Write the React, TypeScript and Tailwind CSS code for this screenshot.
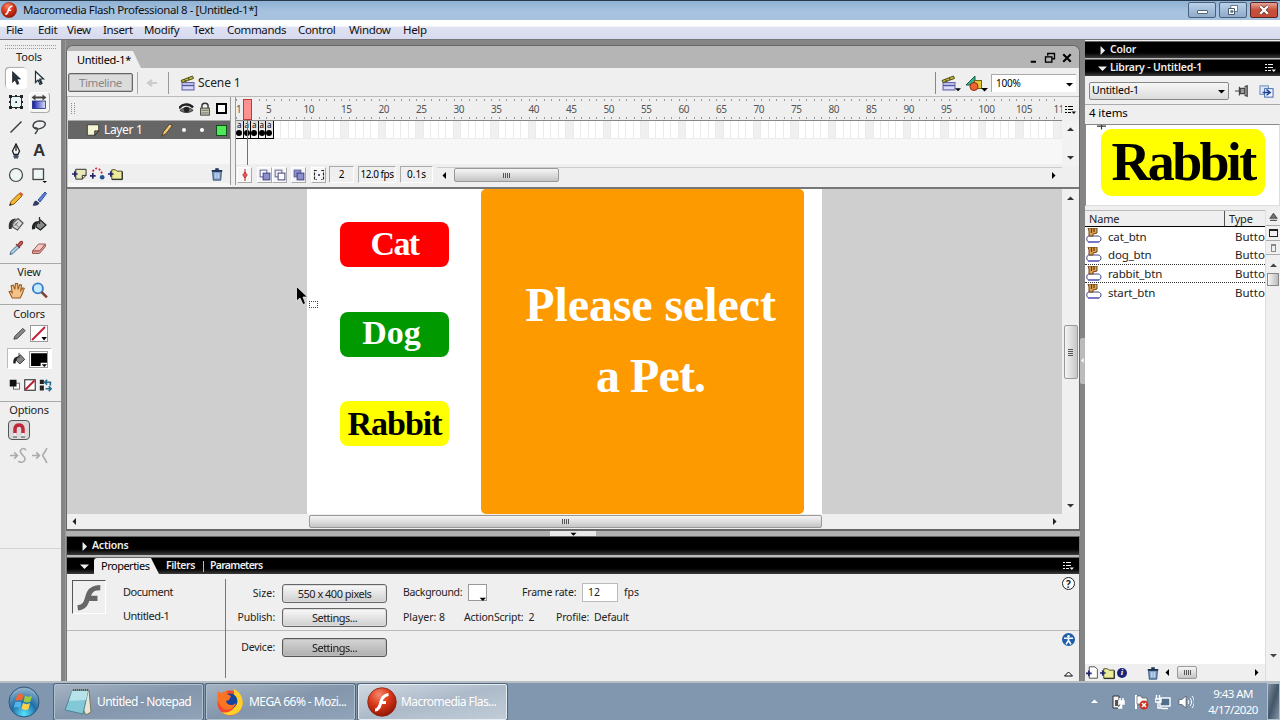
import React from "react";
import clsx from "clsx";

const menuItems = [
  { title: "File", width: "w-[32px]" },
  { title: "Edit", width: "w-[29px]" },
  { title: "View", width: "w-[36px]" },
  { title: "Insert", width: "w-[41px]" },
  { title: "Modify", width: "w-[49px]" },
  { title: "Text", width: "w-[34px]" },
  { title: "Commands", width: "w-[71px]" },
  { title: "Control", width: "w-[51px]" },
  { title: "Window", width: "w-[54px]" },
  { title: "Help", width: "w-[40px]" },
];

const libraryItems = ["cat_btn", "dog_btn", "rabbit_btn", "start_btn"];
const frames = Array.from({ length: 110 }, (_, i) => i + 1);

type IconProps = { className?: string; children?: React.ReactNode; size?: number };

const Svg = ({ className, children, size = 16 }: IconProps) => (
  <svg viewBox="0 0 16 16" width={size} height={size} fill="none" className={clsx("shrink-0", className)}>
    {children}
  </svg>
);

const Arrow = ({ dir, className, size = 7 }: { dir: "up" | "down" | "left" | "right"; className?: string; size?: number }) => {
  const d = {
    up: "M0 5L3.5 1.5L7 5Z",
    down: "M0 2L3.5 5.5L7 2Z",
    left: "M5 0L1.5 3.5L5 7Z",
    right: "M2 0L5.5 3.5L2 7Z",
  }[dir];
  return (
    <svg viewBox="0 0 7 7" width={size} height={size} className={clsx("shrink-0", className)}>
      <path d={d} fill="currentColor" />
    </svg>
  );
};

const FlashLogo = ({ size }: { size: number }) => (
  <svg viewBox="0 0 30 30" width={size} height={size} className="shrink-0">
    <defs>
      <radialGradient id="flashRed" cx="40%" cy="25%" r="80%">
        <stop offset="0" stopColor="#f58a70" />
        <stop offset="0.45" stopColor="#dc3a1c" />
        <stop offset="1" stopColor="#8c1204" />
      </radialGradient>
    </defs>
    <circle cx="15" cy="15" r="14.3" fill="url(#flashRed)" stroke="#8a2314" strokeWidth="0.8" />
    <path d="M8 23C13 23 13 17 14.5 13C16 9.500 17.500 8 21.500 7.500M12.500 15.500H19" stroke="#fff" strokeWidth="3" fill="none" />
  </svg>
);

const Trash = () => (
  <Svg size={14}>
    <path d="M3 5H13L12.300 15H3.700Z" fill="#7f9fca" stroke="#28446c" />
    <path d="M2 4.500H14M6 2.500H10" stroke="#1d3356" strokeWidth="2" />
    <path d="M6 7V13M8 7V13M10 7V13" stroke="#dce8f8" />
  </Svg>
);

const NewFolder = () => (
  <Svg size={15}>
    <path d="M4 4H8L9.500 5.500H15V14H4Z" fill="#ecec9c" stroke="#4a4a20" />
    <path d="M15.300 6V14.500H4" stroke="#222" />
    <path d="M0 8.500H6M3 5.500V11.500" stroke="#24246e" strokeWidth="1.800" />
  </Svg>
);

const OptionsMenu = ({ className }: { className?: string }) => (
  <svg viewBox="0 0 11 10" width="11" height="10" className={clsx("shrink-0", className)}>
    <path d="M0 1.500H2M3 1.500H8M0 4.500H2M3 4.500H8M0 7.500H2M3 7.500H6" stroke="currentColor" strokeWidth="1.200" />
    <path d="M6.500 6.500H11L8.800 9Z" fill="currentColor" />
  </svg>
);

const Scene = () => (
  <Svg>
    <rect x="2" y="7.500" width="12" height="7.500" fill="#b9bbea" stroke="#6467a8" />
    <path d="M2 10.500H14" stroke="#5558a0" />
    <path d="M3 13H13" stroke="#fff" />
    <path d="M1 5.500L12.500 1L13.500 3.500L2 7.500Z" fill="#bdb83b" stroke="#55531b" />
    <path d="M4.500 4.500L6 6.500M8 3L9.500 5" stroke="#3b3a14" />
  </Svg>
);

const toolIcons: React.ReactNode[] = [
  <Svg><path d="M4.500 1.500V12.500L7 10L9 14.500L11 13.500L9 9H12.500Z" fill="#243340" stroke="#111" strokeWidth="0.600" /></Svg>,
  <Svg><path d="M4.500 1.500V12.500L7 10L9 14.500L11 13.500L9 9H12.500Z" fill="#fff" stroke="#1d3138" strokeWidth="1.200" /><path d="M8.500 9.500L10.500 13.500" stroke="#1d3138" strokeWidth="2" /></Svg>,
  <Svg>
    <rect x="2.500" y="2.500" width="11" height="11" fill="#e8f8f8" stroke="#333" />
    <path d="M1 1H4V4H1ZM12 1H15V4H12ZM1 12H4V15H1ZM12 12H15V15H12ZM7 1H9V3H7ZM7 13H9V15H7ZM1 7H3V9H1ZM13 7H15V9H13ZM7.300 7.300H9V9H7.300Z" fill="#222" />
  </Svg>,
  <Svg>
    <defs><linearGradient id="gradTool"><stop stopColor="#0b16a8" /><stop offset="1" stopColor="#dfe3fa" /></linearGradient></defs>
    <rect x="1.500" y="7" width="13" height="7.500" fill="url(#gradTool)" stroke="#22307e" strokeWidth="0.800" />
    <path d="M3 3.500H13" stroke="#444" strokeWidth="2" /><path d="M0.500 3.500L4.500 0.500V6.500ZM15.500 3.500L11.500 0.500V6.500Z" fill="#444" />
  </Svg>,
  <Svg><path d="M2.500 13.500L13.500 2.500" stroke="#3a3a3a" strokeWidth="1.400" /></Svg>,
  <Svg><path d="M5 10C0 8 2 2.500 8 2C14 1.500 16 5 12.500 8C10 10 6 10.500 4.500 9.500C2.500 8.500 6 8 6.500 10C7 12 5 13.500 4 15" stroke="#3d4448" strokeWidth="1.500" /></Svg>,
  <Svg>
    <path d="M8 1L4.500 8L6 11.500H10L11.500 8Z" fill="#f4f4f4" stroke="#222" strokeWidth="1.300" />
    <path d="M8 1V8M5.500 13.500H10.500" stroke="#222" strokeWidth="1.300" /><rect x="6" y="12" width="4" height="3.500" fill="#42526a" />
  </Svg>,
  <span className="font-[Liberation_Sans] text-[17px] leading-none font-bold text-[#333]">A</span>,
  <Svg><circle cx="8" cy="8" r="6.500" fill="#edf5f5" stroke="#444" strokeWidth="1.200" /></Svg>,
  <Svg><rect x="2" y="2" width="10.500" height="10.500" fill="#edf5f5" stroke="#444" strokeWidth="1.300" /><path d="M11.500 14H16L13.800 16Z" fill="#000" /></Svg>,
  <Svg>
    <path d="M1.500 14.500L3 10.500L11 2.500L14 5L6 13Z" fill="#f4b72b" stroke="#8c5b12" />
    <path d="M11 2.500L12.500 1L15.500 3.500L14 5Z" fill="#d85c3c" /><path d="M1.500 14.500L2.300 12.200L3.800 13.800Z" fill="#222" />
  </Svg>,
  <Svg>
    <path d="M7 9L14 1L15.500 2.500L9 11Z" fill="#5f87dc" stroke="#2a4a9c" />
    <path d="M1.500 14.500C3 13 2 10.500 5 9.500L8.500 12C7 15 4 15 1.500 14.500Z" fill="#333d63" />
  </Svg>,
  <Svg>
    <path d="M5 7L10 2.500L15 7L9.500 14L4.500 11Z" fill="#d6d8d8" stroke="#555" strokeWidth="1.200" /><path d="M1 13C0 7 2 2.500 8.500 2.500L5 6L3.500 13Z" fill="#333" /><path d="M7 7.500L11 11.500M10 6L6.500 10" stroke="#666" />
  </Svg>,
  <Svg>
    <path d="M5.500 8L9.500 4L15 9L9.500 14L5 11Z" fill="#868b8b" stroke="#222" strokeWidth="1.200" /><path d="M1 13.500C0.500 8 3 5 8 5L5 8L4 13Z" fill="#222" /><path d="M8.500 8V1" stroke="#333" strokeWidth="1.300" />
  </Svg>,
  <Svg>
    <path d="M2 14.500L3 11.500L9 5.500L11 7.500L5 13.500Z" fill="#a7d3ea" stroke="#476a86" />
    <path d="M8 4L12 8M9.500 5.500L12 2C14 0.500 15.500 2 14 4L11 7Z" fill="#d06c62" stroke="#8c3434" strokeWidth="1.200" />
  </Svg>,
  <Svg>
    <path d="M1.500 11L7.500 4H14.500L8.500 11Z" fill="#f6c7c1" stroke="#9a5c58" /><path d="M1.500 11V13.500H8.500L14.500 6.500V4L8.500 11Z" fill="#e79c94" stroke="#9a5c58" />
  </Svg>,
];

const toolClass = (i: number) =>
  clsx(
    "flex h-[21px] w-[21px] items-center justify-center",
    i === 0 && "rounded-sm bg-white shadow-[-1px_-1px_1px_#aaa]",
    i === 3 && "rounded-sm border border-[#aaa] border-t-white border-l-white bg-[#f6f6f6]",
  );

const ToolsPanel = () => (
  <aside className="flex w-[61px] shrink-0 flex-col bg-[#efefef] text-[11px] tracking-[-0.2px] text-[#222]">
    <div className="mx-[5px] mt-[5px] h-[4px] shrink-0 border-y border-dotted border-[#999]" />
    <div className="h-[15px] pr-[3px] text-center leading-[15px]">Tools</div>
    <div className="mt-[2px] ml-[5px] grid h-[194px] w-[46px] grid-cols-[22px_24px] grid-rows-8 items-center justify-items-center">
      {toolIcons.map((icon, i) => (
        <div key={i} className={toolClass(i)}>{icon}</div>
      ))}
    </div>
    <div className="mt-[3px] h-px shrink-0 bg-[#aaa]" />
    <div className="h-4 pr-[3px] text-center leading-4">View</div>
    <div className="ml-[5px] grid h-[20px] w-[46px] grid-cols-[22px_24px] items-center justify-items-center">
      <Svg size={17}>
        <path d="M4 15L1 9L2.500 8.500L4 10L3 3.500L5 3L6.500 7L7 1.500H9L9.500 7L11 2.500L12.800 3L12 8L14 5.500L15.300 6L13 12L11.500 15Z" fill="#f4c389" stroke="#9a5a20" />
      </Svg>
      <Svg size={17}>
        <circle cx="6.500" cy="6" r="4.700" fill="#c7ecfc" stroke="#397dcb" strokeWidth="1.800" /><path d="M10 9.500L15 14.500" stroke="#80403a" strokeWidth="2.400" />
      </Svg>
    </div>
    <div className="mt-[4px] h-px shrink-0 bg-[#aaa]" />
    <div className="mt-px h-4 pr-[3px] text-center leading-4">Colors</div>
    <div className="flex h-[23px] items-center pl-[12px]">
      <Svg size={15}><path d="M2 14L3 11L11.500 2.500L14 5L5.500 13.500Z" fill="#888" stroke="#444" /></Svg>
      <div className="ml-[3px] flex h-[17px] w-[18px] border border-[#999] bg-white">
        <Svg size={16}><path d="M1 14L14 1" stroke="#c4203a" strokeWidth="2" /><path d="M10.500 11H16L13 14.500Z" fill="#000" /></Svg>
      </div>
    </div>
    <div className="mt-[4px] ml-[8px] flex h-[20px] w-[44px] items-center bg-white pl-[4px] shadow-[-1px_-1px_0_#bbb]">
      <Svg size={14}><path d="M5.500 7L9.500 3L14.500 8.500L9 13.500L5 10Z" fill="#888" stroke="#222" /><path d="M1.500 13C1 8 3 5 8 5L5 8L4 13Z" fill="#222" /><path d="M8 7V1" stroke="#333" /></Svg>
      <div className="ml-[3px] flex h-[17px] w-[19px] items-center border border-[#999] bg-white">
        <Svg size={17}><path d="M1 2H16V11H10V14H1Z" fill="#000" /><path d="M11 12.500H16L13.500 15Z" fill="#000" /></Svg>
      </div>
    </div>
    <div className="mt-[8px] flex h-[16px] items-center gap-[3px] pl-[9px]">
      <Svg size={12}><rect x="6" y="5.500" width="8" height="8" fill="#fff" stroke="#444" /><rect x="1" y="1" width="9" height="9" fill="#111" /></Svg>
      <Svg size={12}><rect x="1" y="1" width="14" height="14" fill="#fff" stroke="#333" strokeWidth="1.500" /><path d="M2 14L14 2" stroke="#c11d2b" strokeWidth="2.500" /></Svg>
      <Svg size={13}><path d="M1 1H6V6H1ZM1 8H6V14H1Z" fill="#222" /><path d="M8 4H14V8M8 12H14M10 1L7 4L10 7M12 9L15 12L12 15" stroke="#256c92" strokeWidth="2" /></Svg>
    </div>
    <div className="mt-[8px] h-px shrink-0 bg-[#aaa]" />
    <div className="h-4 pr-[3px] text-center leading-4">Options</div>
    <div className="mt-[2px] ml-[8px] flex h-[20px] w-[22px] items-center justify-center rounded-sm border border-[#555] bg-[#dadada]">
      <Svg><path d="M4 13V7C4 1.500 12 1.500 12 7V13" stroke="#c32736" strokeWidth="3.500" /><path d="M4 11V14M12 11V14" stroke="#eee" strokeWidth="3.500" /><path d="M2 15H6M10 15H14" stroke="#555" /></Svg>
    </div>
    <div className="mt-[7px] flex h-[18px] gap-[5px] pl-[10px] text-[#aaa]">
      <Svg size={17}><path d="M0 8H6M4 5L7 8L4 11M15 3C13 0 9 2 10 5C11 8 15 9 14 12C13 15 9 15 8 13" stroke="currentColor" strokeWidth="1.500" /></Svg>
      <Svg size={17}><path d="M0 8H6M4 5L7 8L4 11M14 1C13 4 11 6 10 8C11 10 13 12 14 15" stroke="currentColor" strokeWidth="1.500" /></Svg>
    </div>
    <div className="mt-[83px] h-px bg-[#d2d2d2]" />
  </aside>
);

const TitleBar = () => (
  <header className="flex h-[20px] shrink-0 items-start border-t border-[#28394e] bg-linear-to-b from-[#8fb2d3] via-[#a5c1df] to-[#a8c3de] pl-px">
    <div className="mt-px flex"><FlashLogo size={16} /></div>
    <span className="ml-[6px] text-[11.500px] leading-[18px] tracking-[-0.430px] text-[#111]">Macromedia Flash Professional 8 - [Untitled-1*]</span>
    <div className="mt-px mr-[2px] ml-auto flex gap-[3px]">
      <div className="flex h-[16px] w-[28px] items-end justify-center rounded-[2px] border border-[#47617f] bg-linear-to-b from-[#bad1e8] to-[#8eabc9] pb-[3px]">
        <div className="h-[4px] w-[11px] rounded-[1px] border border-[#536477] bg-white" />
      </div>
      <div className="flex h-[16px] w-[28px] items-center justify-center rounded-[2px] border border-[#47617f] bg-linear-to-b from-[#bad1e8] to-[#8eabc9]">
        <Svg size={12}><path d="M5 2H14V10H5Z" fill="#fff" stroke="#46596d" /><path d="M2 6H10V14H2Z" fill="#fff" stroke="#46596d" strokeWidth="1.300" /><path d="M5 9H8V11H5Z" fill="#6685a6" stroke="#46596d" /></Svg>
      </div>
      <div className="flex h-[16px] w-[28px] items-center justify-center rounded-[2px] border border-[#5c2320] bg-linear-to-b from-[#e3a195] via-[#c8503b] to-[#c44c36]">
        <Svg size={12}><path d="M3 3L13 13M13 3L3 13" stroke="#583030" strokeWidth="5" /><path d="M3 3L13 13M13 3L3 13" stroke="#fff" strokeWidth="3.200" /></Svg>
      </div>
    </div>
  </header>
);

const MenuBar = () => (
  <nav className="flex h-[19px] shrink-0 items-center bg-linear-to-b from-white from-30% via-[#dfe2f2] via-40% to-[#d7daee] pl-[6px] text-[11.500px] text-[#111]">
    {menuItems.map((item) => (
      <span key={item.title} className={clsx("tracking-[-0.350px] whitespace-nowrap", item.width)}>
        {item.title}
      </span>
    ))}
  </nav>
);

const EditBar = () => (
  <div className="flex h-[29px] shrink-0 items-center border-b border-[#bbb] bg-[#efefef] pt-px pl-px">
    <div className="flex h-[19px] w-[65px] items-center justify-center rounded-[2px] border border-[#666] bg-[#dcdcdc] text-[11.500px] tracking-[-0.400px] text-[#888] shadow-[inset_0_0_0_1px_#bbb]">Timeline</div>
    <div className="ml-[4px] h-[22px] w-px bg-[#aaa]" />
    <Svg className="ml-[6px] text-[#ccc]"><path d="M13 8H5M8 5L4 8L8 11" stroke="currentColor" strokeWidth="2.200" /></Svg>
    <div className="ml-[8px] h-[22px] w-px bg-[#999]" />
    <div className="ml-[11px] flex"><Scene /></div>
    <span className="ml-[2px] text-[12px] tracking-[-0.100px] text-[#222]">Scene 1</span>
    <div className="mr-[3px] ml-auto flex items-center">
      <div className="h-[22px] w-px bg-[#888]" />
      <div className="ml-[5px] flex items-end"><Scene /><Arrow dir="down" className="-mb-[2px] -ml-[2px] w-[6px]" /></div>
      <div className="ml-[5px] flex items-end">
        <Svg><path d="M9 1V10H0Z" fill="#31b291" stroke="#1b5c4c" /><rect x="8.500" y="5.500" width="7" height="8" fill="#e8c836" stroke="#76621b" /><circle cx="8" cy="11.500" r="4" fill="#ee6530" stroke="#8a2f14" /></Svg>
        <Arrow dir="down" className="-mb-[2px] -ml-[1px]" />
      </div>
      <div className="ml-[3px] flex h-[18px] w-[85px] items-start justify-between border-t border-l border-[#aaa] bg-white pl-[4px] text-[10px] leading-[16px] tracking-[-0.200px]">
        100%<Arrow dir="down" className="mt-[6px] mr-[3px]" />
      </div>
    </div>
  </div>
);

const LayerList = () => (
  <div className="flex w-[163px] shrink-0 flex-col border-l border-[#ccc] bg-[#f7f7f7]">
    <div className="flex h-[24px] items-center border-b border-[#aaa] bg-[#efefef] pl-[3px]">
      <div className="h-[11px] w-[4px] border-x border-dotted border-[#888]" />
      <Svg className="ml-auto" size={15}><path d="M0 8C3 3 11 2 15 7" stroke="#222" strokeWidth="2.500" /><path d="M1 10C4 7 11 6 15 10C11 13 5 13 1 10Z" fill="#777" stroke="#333" /><circle cx="8" cy="9" r="3" fill="#222" /></Svg>
      <Svg className="ml-[4px]" size={14}><path d="M4.500 7V4C4.500 0.500 11.500 0.500 11.500 4V7" stroke="#333" strokeWidth="1.600" /><rect x="3" y="7" width="10" height="8" fill="#c8cdb0" stroke="#333" /><path d="M4 9.500H12M4 12.500H12" stroke="#666" /></Svg>
      <div className="mr-[3px] ml-[4px] h-[11px] w-[11px] border-2 border-black bg-white" />
    </div>
    <div className="flex h-[18px] items-center bg-[#666] text-[12px] text-white">
      <Svg className="ml-[18px]" size={14}><path d="M1.500 2H14.500V9L10 14H1.500Z" fill="#f5f5d4" stroke="#333" /><path d="M14.500 9H10V14Z" fill="#8a8a6a" stroke="#222" /></Svg>
      <span className="ml-[4px] tracking-[-0.350px]">Layer 1</span>
      <Svg className="ml-auto" size={14}><path d="M2 15L4 10L11 1L14 3L7 12Z" fill="#f2c879" stroke="#4a3920" /></Svg>
      <i className="ml-[8px] h-[4px] w-[4px] rounded-full bg-white" />
      <i className="ml-[14px] h-[4px] w-[4px] rounded-full bg-white" />
      <div className="mr-[3px] ml-[12px] h-[11px] w-[11px] border border-[#134d17] bg-[#4fe859]" />
    </div>
    <div className="mt-[25px] flex h-[19px] items-center gap-[3px] bg-[#efefef] pl-[4px]">
      <Svg size={15}><path d="M4 3.500H15V10L11 14H4Z" fill="#e9e9b8" stroke="#222" /><path d="M15 10H11V14" stroke="#222" /><path d="M0 8.500H6M3 5.500V11.500" stroke="#24246e" strokeWidth="1.800" /></Svg>
      <Svg size={15}><path d="M3 6C5 1 11 1 13 9" stroke="#d4273e" strokeWidth="2" strokeDasharray="2 2" /><circle cx="13" cy="12" r="2.500" fill="#284e97" /><path d="M0 10.500H6M3 7.500V13.500" stroke="#24246e" strokeWidth="1.800" /></Svg>
      <NewFolder />
      <div className="mr-[6px] ml-auto flex"><Trash /></div>
    </div>
  </div>
);

const Frames = () => (
  <div className="relative min-w-0 flex-1 overflow-hidden">
    <div className="flex h-[24px] border-b border-[#888] bg-[#efefef]">
      {frames.map((n) => (
        <div key={n} className="flex w-[7.5px] shrink-0 flex-col justify-between">
          <div className="mt-[2px] h-[2px] w-px bg-[#999]" />
          <span className="h-[12px] w-0 text-[10px] leading-[12px] tracking-[-0.400px] whitespace-nowrap text-[#555]">{n === 1 || n % 5 === 0 ? n : ""}</span>
          <div className="mb-px h-[2px] w-px bg-[#999]" />
        </div>
      ))}
    </div>
    <div className="flex h-[18px]">
      {frames.map((n) =>
        n <= 5 ? (
          <div key={n} className="flex h-full w-[7.5px] shrink-0 flex-col items-center border-r border-b border-black bg-linear-to-b from-[#dcdcdc] to-[#f5f5f5]">
            <span className="h-[9px] text-[8px] leading-[8px]">a</span>
            <div className="h-[6px] w-[6px] rounded-full bg-black" />
          </div>
        ) : (
          <div key={n} className={clsx("h-full w-[7.5px] shrink-0 border-r border-b border-[#ebebeb]", n % 5 === 0 ? "bg-[#f0f0f0]" : "bg-white")} />
        ),
      )}
    </div>
    <div className="h-[25px] bg-[#f7f7f7]" />
    <div className="absolute top-[2px] left-[7px] h-[21px] w-[9px] border border-[#c03a3a] bg-[#ff9090]" />
    <div className="absolute top-[23px] left-[11px] h-[45px] w-px bg-[#d04a4a]" />
  </div>
);

const FrameButton = ({ children }: { children: React.ReactNode }) => (
  <div className="flex h-[16px] w-[15px] items-center justify-center border border-[#aaa] border-t-white border-l-white bg-[#f6f6f6]">{children}</div>
);

const Thumb = ({ className }: { className?: string }) => (
  <div className={clsx("flex items-center justify-center gap-px rounded-[2px] border border-[#999] bg-linear-to-b from-[#f5f5f5] via-[#dedede] to-[#c4c4c4]", className)}>
    <i className="h-[5px] w-px bg-[#555]" />
    <i className="h-[5px] w-px bg-[#555]" />
    <i className="h-[5px] w-px bg-[#555]" />
    <i className="h-[5px] w-px bg-[#555]" />
  </div>
);

const onion = (a: string, b: string) => (
  <Svg size={12}><rect x="1.500" y="1.500" width="9" height="9" fill={a} stroke="#5b5f99" strokeWidth="1.300" /><rect x="5.500" y="5.500" width="9" height="9" fill={b} stroke="#3c407c" strokeWidth="1.300" /></Svg>
);

const TimelineFooter = () => (
  <div className="flex h-[19px] items-center bg-[#efefef] text-[10px]">
    <div className="ml-px flex items-center">
      <FrameButton><Svg size={12}><path d="M8 0V16" stroke="#b33" strokeWidth="1.500" /><path d="M8 4L11 8L8 12L5 8Z" fill="#e55" stroke="#a22" /></Svg></FrameButton>
      <div className="ml-[5px] flex">
        <FrameButton>{onion("#fff", "#8d90cc")}</FrameButton>
        <FrameButton>{onion("#eee", "#fff")}</FrameButton>
      </div>
      <div className="ml-[4px]"><FrameButton>{onion("#8d90cc", "#8d90cc")}</FrameButton></div>
      <div className="ml-[5px]"><FrameButton><Svg size={12}><path d="M5 2H2V14H5M11 2H14V14H11" stroke="#222" strokeWidth="1.500" strokeDasharray="4 1.500" /><circle cx="8" cy="8" r="1.300" fill="#225" /></Svg></FrameButton></div>
    </div>
    <div className="ml-[3px] h-[17px] w-[25px] border border-[#aaa] border-r-white border-b-white text-center leading-[15px]">2</div>
    <div className="ml-[4px] h-[17px] w-[38px] border border-[#aaa] border-r-white border-b-white text-center leading-[15px] tracking-[-0.450px] whitespace-nowrap">12.0 fps</div>
    <div className="ml-[4px] h-[17px] w-[33px] border border-[#aaa] border-r-white border-b-white text-center leading-[15px]">0.1s</div>
    <div className="ml-[4px] flex h-[16px] flex-1 items-center border-t border-[#ccc]">
      <Arrow dir="left" className="ml-[4px]" />
      <Thumb className="ml-[6px] h-[14px] w-[105px]" />
      <Arrow dir="right" className="mr-[5px] ml-auto" />
    </div>
  </div>
);

const Timeline = () => (
  <div className="flex h-[90px] shrink-0 bg-[#efefef]">
    <LayerList />
    <div className="h-[88px] w-[6px] shrink-0 border-x border-[#999] bg-[#efefef]" />
    <div className="flex min-w-0 flex-1 flex-col">
      <Frames />
      <TimelineFooter />
      <div className="h-[3px]" />
    </div>
    <div className="flex w-[17px] shrink-0 flex-col items-center">
      <OptionsMenu className="mt-[8px]" />
      <div className="mt-[6px] flex h-[45px] w-full flex-col items-center justify-between bg-[#f2f2f2] py-[5px] text-[#333]">
        <Arrow dir="up" />
        <Arrow dir="down" />
      </div>
    </div>
  </div>
);

const petButton = "flex h-[45px] w-[109px] shrink-0 items-center justify-center rounded-[8px] leading-none";

const Stage = () => (
  <div className="flex h-[325px] shrink-0 bg-[#cfcfcf]">
    <div className="relative flex min-w-0 flex-1 pl-[240px] font-['Liberation_Serif'] font-bold">
      <div className="flex w-[515px] bg-white">
        <div className="flex w-[174px] flex-col items-start gap-[44.600px] pt-[33px] pl-[33px] text-white">
          <div className={clsx(petButton, "bg-[#fe0000] pb-[2px] text-[34px] tracking-[-1.600px]")}>Cat</div>
          <div className={clsx(petButton, "bg-[#009900] pr-[6px] pb-[3px] text-[34px]")}>Dog</div>
          <div className={clsx(petButton, "bg-[#ffff00] text-[34px] tracking-[-1px] text-black")}>Rabbit</div>
        </div>
        <div className="w-[323px] rounded-[5px] bg-[#fd9a00] pt-[80px] pl-[16px] text-center text-[48px] leading-[71px] text-white">
          <p className="tracking-[-0.100px]">Please select</p>
          <p className="tracking-[-0.900px]">a Pet.</p>
        </div>
      </div>
      <svg viewBox="0 0 24 24" width="24" height="24" className="absolute top-[97px] left-[229px]">
        <path d="M0.500 0.500V15L4 12L7 18.500L9.500 17.500L7 11H11.500Z" fill="#000" stroke="#fff" strokeWidth="0.700" />
        <path d="M13 15.500H22M13 21.500H22" stroke="#444" strokeDasharray="1 1" />
        <path d="M13.500 15V22M21.500 15V22" stroke="#444" strokeDasharray="1 1" />
      </svg>
    </div>
    <div className="flex w-[17px] shrink-0 flex-col items-center bg-[#f0f0f0] text-[#333]">
      <Arrow dir="up" className="mt-[6px]" />
      <div className="mt-[123px] flex h-[54px] w-[14px] flex-col items-center justify-center gap-px rounded-[2px] border border-[#999] bg-linear-to-r from-[#f5f5f5] to-[#c6c6c6]">
        <i className="h-px w-[5px] bg-[#555]" />
        <i className="h-px w-[5px] bg-[#555]" />
        <i className="h-px w-[5px] bg-[#555]" />
        <i className="h-px w-[5px] bg-[#555]" />
      </div>
      <Arrow dir="down" className="mt-auto mb-[5px]" />
    </div>
  </div>
);

const DocumentPanel = () => (
  <section className="flex h-[486px] shrink-0 flex-col overflow-hidden rounded-t-[7px] border border-b-2 border-[#666] bg-[#b4b4b4]">
    <div className="flex h-[22px] shrink-0 items-end bg-[#b5b5b5]">
      <div className="h-[17px] w-[74px] bg-[#efefef] pl-[10px] text-[11px] leading-[17px] tracking-[-0.300px] [clip-path:polygon(0_0,66px_0,74px_100%,0_100%)]">Untitled-1*</div>
      <div className="mr-[6px] mb-[4px] ml-auto flex items-center gap-[5px]">
        <Svg size={12}><path d="M5 13H12" stroke="#000" strokeWidth="2.500" /></Svg>
        <Svg size={12}><path d="M5 5V2H14V9H11" stroke="#000" strokeWidth="1.800" /><rect x="2" y="6.500" width="8.500" height="7" stroke="#000" strokeWidth="1.800" /></Svg>
        <Svg size={12}><path d="M3 3L13 13M13 3L3 13" stroke="#000" strokeWidth="2.800" /></Svg>
      </div>
    </div>
    <EditBar />
    <Timeline />
    <div className="h-[2px] shrink-0 bg-[#777]" />
    <Stage />
    <div className="flex flex-1 items-center bg-[#efefef] text-[#222]">
      <Arrow dir="left" className="ml-[4px]" />
      <Thumb className="ml-[231px] h-[13px] w-[513px]" />
      <Arrow dir="right" className="mr-[21px] ml-auto" />
    </div>
  </section>
);

const blackBar = "flex shrink-0 items-center border-t border-[#666] bg-linear-to-b from-black from-55% to-[#3d3d3d] text-[10.500px] font-semibold tracking-[-0.200px] text-[#eee]";
const formButton = "flex h-[19px] w-[105px] items-center justify-center rounded-[3px] border border-[#666] bg-linear-to-b from-[#fafafa] to-[#cfcfcf] text-[11px] leading-none tracking-[-0.500px] shadow-[inset_0_0_0_1px_#ddd]";

const PropertiesPanel = () => (
  <section className="flex min-h-0 flex-1 flex-col border-x border-[#777] bg-[#efefef] text-[10.500px] text-[#222]">
    <div className={clsx(blackBar, "h-[19px]")}>
      <Arrow dir="right" size={9} className="ml-[13px]" />
      <span className="ml-[3px]">Actions</span>
    </div>
    <div className="h-[2px] shrink-0 bg-[#bbb]" />
    <div className={clsx(blackBar, "h-[17px]")}>
      <Arrow dir="down" size={9} className="ml-[13px]" />
      <div className="ml-[5px] h-full w-[65px] rounded-tl-[3px] bg-[#efefef] pl-[7px] text-[11px] leading-[16px] font-normal tracking-[-0.500px] text-black [clip-path:polygon(0_0,57px_0,65px_100%,0_100%)]">Properties</div>
      <span className="ml-[7px] w-[37px] tracking-[-0.400px]">Filters</span>
      <div className="h-[11px] w-px bg-[#bbb]" />
      <span className="ml-[6px] tracking-[-0.700px]">Parameters</span>
      <OptionsMenu className="mr-[5px] ml-auto" />
    </div>
    <div className="flex min-h-0 flex-1 bg-linear-to-b from-[#efefef] from-[56px] via-[#888] via-[56px] to-[#efefef] to-[57px]">
      <div className="flex w-[158px] shrink-0 pt-[6px] pl-[5px]">
        <div className="h-[34px] w-[34px] border border-[#555] border-r-white border-b-white">
          <svg viewBox="0 0 34 34" width="32" height="32">
            <path d="M5 28.500C16 27 14 19 17.500 12.500C20 8 23 7 29 7M16 18.500H26" stroke="#666" strokeWidth="5.500" fill="none" />
          </svg>
        </div>
        <div className="ml-[17px] flex flex-col gap-[8px] text-[11px] leading-4 tracking-[-0.500px]">
          <span className="mt-[4px]">Document</span>
          <span>Untitled-1</span>
        </div>
      </div>
      <div className="mt-[5px] mb-[3px] w-px shrink-0 bg-[#777]" />
      <div className="ml-px grid h-[91px] w-[160px] shrink-0 grid-cols-[48px_105px] grid-rows-[24px_24px_36px] items-center gap-x-[7px] pt-[7px] leading-none">
        <span className="text-right">Size:</span>
        <div className={formButton}>550 x 400 pixels</div>
        <span className="text-right tracking-[-0.200px]">Publish:</span>
        <div className={formButton}>Settings...</div>
        <span className="text-right tracking-[-0.200px]">Device:</span>
        <div className={clsx(formButton, "brightness-85")}>Settings...</div>
      </div>
      <div className="ml-[16px] flex flex-col pt-[9px]">
        <div className="flex h-[19px] items-center">
          <span className="w-[65px] tracking-[-0.300px]">Background:</span>
          <div className="h-[17px] w-[19px] border border-[#999] bg-white"><Svg size={17}><path d="M10 12H16L13 15Z" fill="#000" /></Svg></div>
          <span className="ml-[35px] w-[60px] tracking-[-0.200px]">Frame rate:</span>
          <div className="h-[19px] w-[36px] border border-[#bbb] bg-white pl-[5px] leading-[17px]">12</div>
          <span className="ml-[6px]">fps</span>
        </div>
        <div className="mt-[6px] flex h-[19px] items-center">
          <span className="w-[61px]">Player: 8</span>
          <span className="w-[92px] tracking-[-0.200px]">ActionScript:&nbsp; 2</span>
          <span className="tracking-[-0.200px]">Profile:&nbsp; Default</span>
        </div>
      </div>
      <div className="mr-[4px] ml-auto flex flex-col items-center pt-[3px]">
        <div className="flex h-[13px] w-[13px] items-center justify-center rounded-full border border-[#222] bg-white text-[10px] leading-none font-bold">?</div>
        <Svg className="mt-[43px]" size={13}><circle cx="8" cy="8" r="8" fill="#1e5fa8" /><circle cx="8" cy="4" r="1.500" fill="#fff" /><path d="M2.500 6.500H13.500M8 6V9M8 9L5 14M8 9L11 14" stroke="#fff" strokeWidth="2" /></Svg>
        <svg viewBox="0 0 9 6" width="9" height="6" className="mt-[25px]"><path d="M0.500 5L4.500 1L8.500 5Z" fill="#fff" stroke="#000" /></svg>
      </div>
    </div>
  </section>
);

const LibraryRow = ({ name, selected }: { name: string; selected: boolean }) => (
  <div className={clsx("flex h-[18.700px] items-center overflow-hidden border-y text-[11.500px] text-[#222]", selected ? "border-dotted border-[#333]" : "border-transparent")}>
    <Svg className="ml-px"><path d="M3 8H12C16 8 16 14 12 14H3C0 14 0 8 3 8Z" fill="#fff" stroke="#464687" /><path d="M2 14H13" stroke="#7779c4" strokeWidth="2" /><path d="M3 8V3L2 0H11V5L7 6V8Z" fill="#e0a352" stroke="#6c421a" /><path d="M5.500 0V5M8 0V4" stroke="#6c421a" strokeWidth="1.300" /></Svg>
    <span className="ml-[6px] w-[127px] shrink-0 tracking-[-0.150px]">{name}</span>
    <span>Butto</span>
  </div>
);

const LibraryPanel = () => (
  <aside className="flex w-[195px] shrink-0 flex-col bg-[#efefef]">
    <div className={clsx(blackBar, "mt-[1px] h-[17px]")}>
      <Arrow dir="right" size={9} className="ml-[13px]" />
      <span className="ml-[3px]">Color</span>
    </div>
    <div className="h-px shrink-0 bg-[#bbb]" />
    <div className={clsx(blackBar, "h-[17px]")}>
      <Arrow dir="down" size={9} className="ml-[13px]" />
      <span className="ml-[3px] tracking-[-0.200px]">Library - Untitled-1</span>
      <OptionsMenu className="mr-[4px] ml-auto" />
    </div>
    <div className="flex h-[29px] shrink-0 items-center border-b border-[#aaa] pt-[2px] pl-[4px]">
      <div className="flex h-[18px] w-[140px] items-center justify-between rounded-[2px] border border-[#888] bg-linear-to-b from-[#f7f7f7] to-[#dcdcdc] pr-[3px] pl-[2px] text-[10.500px] tracking-[-0.200px]">
        Untitled-1<Arrow dir="down" />
      </div>
      <Svg className="ml-[6px]" size={14}><path d="M0 8H5M5 3V13M6 5H11V11H6ZM11 3L14 2V14L11 13" fill="#999" stroke="#444" strokeWidth="1.300" /></Svg>
      <Svg className="ml-[10px]" size={15}><rect x="1" y="2" width="9" height="9" fill="#dbe6f8" stroke="#6683b8" /><rect x="6" y="5" width="9" height="9" fill="#eef4ff" stroke="#3861a8" /><path d="M4 9H11M8 6L12 9L8 12" stroke="#1d3f90" strokeWidth="1.500" /></Svg>
    </div>
    <div className="h-[19px] shrink-0 pl-[4px] text-[11.500px] leading-[15px] tracking-[-0.100px]">4 items</div>
    <div className="relative h-[82px] shrink-0 border border-[#888] border-r-[#ddd] border-b-[#ddd] bg-white pt-[4px] pl-[15px]">
      <div className="flex h-[67px] w-[164px] items-center justify-center rounded-[11px] bg-[#ffff00] pb-[2px] font-['Liberation_Serif'] text-[54px] leading-none font-bold tracking-[-2.700px]">Rabbit</div>
      <Svg size={9} className="absolute top-0 left-[11px]"><path d="M0 2H16M8 0V8" stroke="#333" strokeWidth="2" /></Svg>
    </div>
    <div className="mt-[4px] flex min-h-0 flex-1">
      <div className="flex w-[180px] min-w-0 flex-col bg-white">
        <div className="flex h-[17px] shrink-0 border-t border-b border-t-[#bbb] border-b-black bg-[#efefef] text-[11px] leading-[15px] tracking-[-0.200px] text-[#222]">
          <span className="w-[140px] border-r border-[#555] pl-[4px]">Name</span>
          <span className="pl-[4px]">Type</span>
        </div>
        {libraryItems.map((name) => (
          <LibraryRow key={name} name={name} selected={name === "rabbit_btn"} />
        ))}
        <div className="mt-auto flex h-[17px] shrink-0 items-center bg-[#efefef] pl-px">
          <Svg size={13}><path d="M4 1H11L14 4V15H4Z" fill="#fff" stroke="#333" /><path d="M0 9H7M3.500 5.500V12.500" stroke="#24246e" strokeWidth="2" /></Svg>
          <div className="ml-[1px]"><NewFolder /></div>
          <div className="ml-[2px] flex h-[10px] w-[10px] items-center justify-center rounded-full bg-[#1c2478] font-['Liberation_Serif'] text-[9px] font-bold text-white italic">i</div>
          <div className="ml-[19px]"><Trash /></div>
          <Arrow dir="left" className="ml-[4px]" />
          <Thumb className="ml-[6px] h-[13px] w-[20px]" />
          <Arrow dir="right" className="mr-[5px] ml-auto" />
        </div>
      </div>
      <div className="flex flex-1 flex-col items-center border-l border-[#ddd] bg-[#f0f0f0] text-[#444]">
        <div className="flex h-[16px] w-full items-center justify-center border-b border-[#aaa]"><Svg size={9}><path d="M8 1L14 9H2ZM2 13H14" fill="#777" stroke="#555" strokeWidth="2" /></Svg></div>
        <div className="flex h-[15px] w-full items-center justify-center border-b border-[#aaa]"><div className="h-[8px] w-[9px] border border-t-2 border-[#222]" /></div>
        <div className="flex h-[14px] w-full items-center justify-center border-b border-[#aaa]"><div className="h-[8px] w-[5px] border border-t-2 border-[#888]" /></div>
        <Arrow dir="up" className="mt-[7px]" />
        <div className="mt-[4px] h-[13px] w-[12px] border border-[#888] bg-linear-to-r from-[#f7f7f7] to-[#bbb]" />
        <Arrow dir="down" className="mt-auto mb-[22px]" />
      </div>
    </div>
  </aside>
);

const TaskButton = ({ title, active, children }: { title: string; active?: boolean; children: React.ReactNode }) => (
  <div
    className={clsx(
      "flex h-[36px] w-[149px] items-center rounded-[2px] border bg-linear-to-br text-[12px] text-white shadow-[0_0_0_1px_#51647a]",
      active ? "border-[#e6edf3] from-[#cfd9e2] via-[#adbac9] to-[#c0cdd8]" : "border-[#aebfce] from-[#a4b3c3] via-[#8496ac] to-[#8fa3b9]",
    )}
  >
    {children}
    <span className="tracking-[-0.560px] whitespace-nowrap">{title}</span>
  </div>
);

const Taskbar = () => (
  <footer className="flex h-[39px] shrink-0 items-center border-t-2 border-[#b5bdc5] bg-[#8196af]">
    <svg viewBox="0 0 32 32" width="32" height="32" className="ml-[8px] shrink-0">
      <defs><radialGradient id="orb" cx="50%" cy="90%" r="85%"><stop stopColor="#5ae4fa" /><stop offset="0.500" stopColor="#1f6ea8" /><stop offset="1" stopColor="#8fb0c8" /></radialGradient></defs>
      <circle cx="16" cy="16" r="15" fill="url(#orb)" stroke="#2c557b" />
      <path d="M9 9C12 7 14 8 15.500 9L14 15C12 14 10 13.500 7.500 15Z" fill="#ee6a34" />
      <path d="M17 9.500C19 11 22 11 24 9.500L22.500 15.500C20 17 17.500 16.500 15.500 15.500Z" fill="#97ca45" />
      <path d="M7 16.500C10 15 12 15.500 13.500 16.500L12 22C10 20.500 8 20.500 5.800 22Z" fill="#55b4ec" />
      <path d="M15 17C17.500 18.500 20 18.500 22 17L20.500 23C18 24.500 15.500 24 13.500 22.500Z" fill="#fbd249" />
    </svg>
    <div className="ml-[14px] flex gap-[3px]">
      <TaskButton title="Untitled - Notepad">
        <svg viewBox="0 0 28 28" width="28" height="28" className="mr-[5px] ml-[9px]">
          <path d="M9 2H25L27 24L22 27Z" fill="#e9e5d5" stroke="#77755e" />
          <path d="M8 3H24L19 26L1 22Z" fill="#82c8d6" stroke="#4a8496" /><path d="M8 3H24L22 12L5 13Z" fill="#b6e3e9" /><path d="M9 2H24" stroke="#555" strokeWidth="2" strokeDasharray="1 1" />
        </svg>
      </TaskButton>
      <TaskButton title="MEGA 66% - Mozi...">
        <svg viewBox="0 0 28 28" width="28" height="28" className="mr-[5px] ml-[9px]">
          <circle cx="14" cy="15" r="12.500" fill="#f8462f" /><path d="M18 1C26 5 29 14 25 21C21 28 11 29 5 24C17 27 23 16 18 8Z" fill="#ffd02b" />
          <circle cx="14" cy="13" r="7.500" fill="#14449e" /><path d="M2 3C4 5 5 5 7 5L11 2V6L15 8L13 12L10 13C11 18 17 18 20 15C18 23 7 24 4 17C1 13 1 7 2 3Z" fill="#fa7424" />
        </svg>
      </TaskButton>
      <TaskButton title="Macromedia Flas..." active>
        <div className="mr-[4px] ml-[8px]"><FlashLogo size={30} /></div>
      </TaskButton>
    </div>
    <div className="ml-auto flex h-full items-center text-white">
      <Arrow dir="up" className="mr-[12px]" />
      <Svg className="mr-[7px]"><path d="M3 2H9V14H3Z" fill="#f5f5f5" stroke="#333" /><path d="M5 6H8V12H5Z" fill="#555" /><path d="M10 4V7M13 4V7M9 7H14V10H9ZM11.500 10V14H8" fill="#fff" stroke="#fff" strokeWidth="1.500" /></Svg>
      <Svg className="mr-[6px]"><path d="M3 1V15" stroke="#fff" strokeWidth="2" /><path d="M4 2H8L9 4H14V10H4Z" fill="#fff" stroke="#444" strokeWidth="0.600" /><circle cx="11" cy="11" r="4.500" fill="#cf3123" /><path d="M9 9L13 13M13 9L9 13" stroke="#fff" strokeWidth="1.500" /></Svg>
      <Svg className="mr-[7px]"><rect x="5" y="4" width="10" height="8" fill="#52708c" stroke="#fff" strokeWidth="1.400" /><path d="M7 14.500H13M1.500 1V5M4.500 1V5M0 5H6V8H0ZM3 8V14H7" stroke="#fff" strokeWidth="1.400" /></Svg>
      <Svg className="mr-[10px]"><path d="M1 5.500H4L8 2V14L4 10.500H1Z" fill="#fff" stroke="#444" strokeWidth="0.600" /><path d="M10 6C11 7 11 9 10 10M12 4C14 6 14 10 12 12M14 2C17 5 17 11 14 14" stroke="#fff" /></Svg>
      <div className="w-[58px] text-center text-[11.500px] leading-[16px] tracking-[-0.550px]">
        <p>9:43 AM</p>
        <p>4/17/2020</p>
      </div>
      <div className="ml-[5px] h-full w-[13px] border border-[#b4c1cd] bg-linear-to-br from-[#8492a2] via-[#43566a] to-[#8594a5]" />
    </div>
  </footer>
);

const App = () => {
  return (
    <div className="flex h-[720px] w-[1280px] flex-col overflow-hidden bg-[#858585] font-['Noto_Sans',sans-serif] text-black">
      <TitleBar />
      <MenuBar />
      <main className="flex min-h-0 flex-1 border-t border-[#777]">
        <ToolsPanel />
        <div className="w-[5px] shrink-0 border-r border-[#999] bg-[#858585]" />
        <div className="flex w-[1014px] shrink-0 flex-col pt-[5px]">
          <DocumentPanel />
          <div className="flex h-[5px] shrink-0 justify-center bg-[#b0b0b0]">
            <div className="flex w-[46px] items-center justify-center bg-[#e8e8e8]"><Arrow dir="down" className="h-[6px]" /></div>
          </div>
          <PropertiesPanel />
        </div>
        <div className="flex w-[5px] shrink-0 items-center bg-[#858585]">
          <div className="flex h-[46px] w-full items-center rounded-l-[2px] bg-[#bbb] text-white"><Arrow dir="left" className="w-[5px]" /></div>
        </div>
        <LibraryPanel />
      </main>
      <Taskbar />
    </div>
  );
};

export default App;
